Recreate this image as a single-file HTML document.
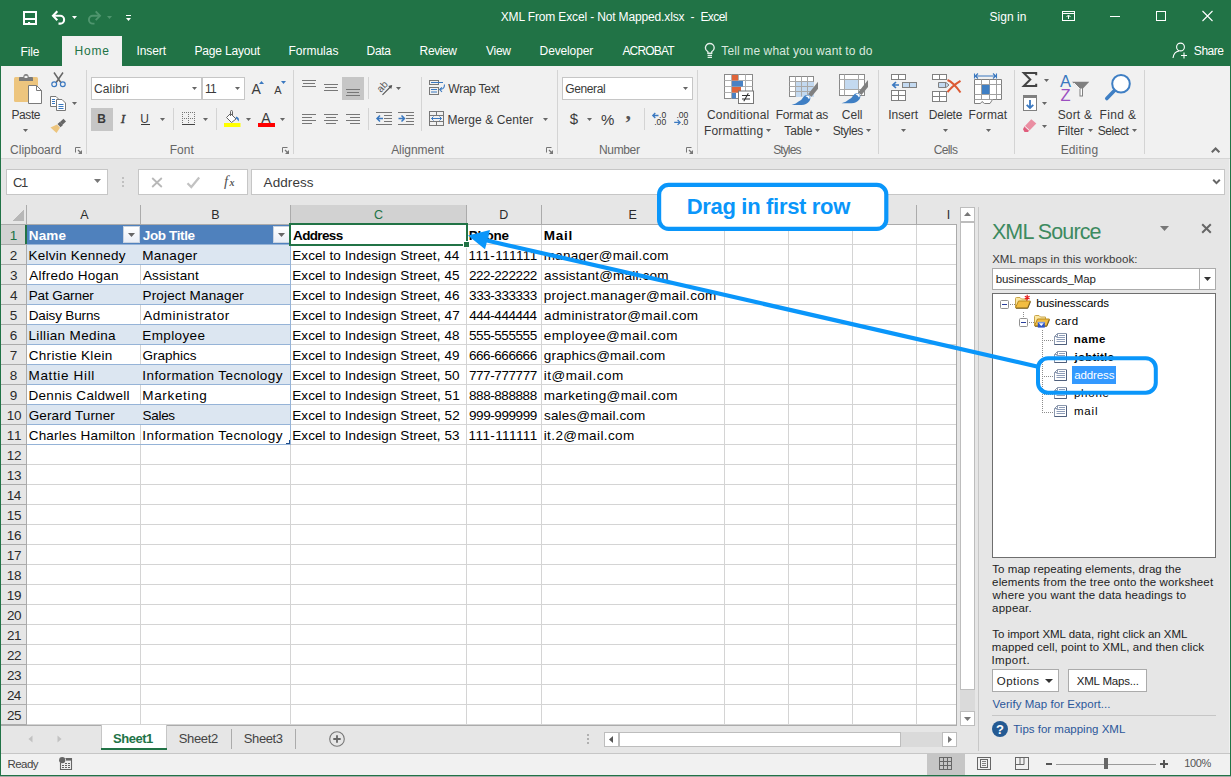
<!DOCTYPE html>
<html lang="en"><head><meta charset="utf-8"><title>XML From Excel - Not Mapped.xlsx - Excel</title>
<style>
html,body{margin:0;padding:0}
body{width:1231px;height:777px;position:relative;overflow:hidden;background:#e6e6e6;font-family:"Liberation Sans",sans-serif;font-size:12px;color:#444}
.a{position:absolute;display:block}
.t{position:absolute;white-space:nowrap;display:block}
svg{overflow:visible}
</style></head>
<body>
<!-- s_frame -->
<div class="a" style="left:0px;top:0px;width:1231px;height:66px;background:#217346;"></div>
<div class="a" style="left:1px;top:66px;width:1229px;height:92px;background:#f1f1f1;"></div>
<div class="a" style="left:1px;top:158px;width:1229px;height:1px;background:#d6d6d6;"></div>
<div class="a" style="left:62px;top:36px;width:60px;height:30px;background:#f1f1f1;"></div>
<div class="a" style="left:1px;top:753px;width:1229px;height:1px;background:#c6c6c6;"></div>
<div class="a" style="left:1px;top:754px;width:1229px;height:21px;background:#f1f1f1;"></div>
<div class="a" style="left:0px;top:0px;width:1px;height:777px;background:#217346;"></div>
<div class="a" style="left:1230px;top:0px;width:1px;height:777px;background:#217346;"></div>
<div class="a" style="left:0px;top:775px;width:1231px;height:1px;background:#217346;"></div>
<div class="a" style="left:0px;top:776px;width:1231px;height:1px;background:#a8a8a8;"></div>
<!-- s_title -->
<span class="t" style="left:500.73px;top:9px;font-size:12px;line-height:16px;color:#fff;letter-spacing:-0.144px;">XML From Excel - Not Mapped.xlsx</span>
<span class="t" style="left:690.47px;top:9px;font-size:12px;line-height:16px;color:#fff;">-</span>
<span class="t" style="left:700.42px;top:9px;font-size:12px;line-height:16px;color:#fff;letter-spacing:-0.589px;">Excel</span>
<span class="t" style="left:989.46px;top:9px;font-size:12px;line-height:16px;color:#fff;letter-spacing:0.039px;">Sign in</span>
<span class="t" style="left:20.62px;top:44px;font-size:12px;line-height:16px;color:#fff;letter-spacing:-0.139px;">File</span>
<span class="t" style="left:74.42px;top:43px;font-size:12px;line-height:16px;color:#217346;letter-spacing:0.836px;">Home</span>
<span class="t" style="left:136.49px;top:43px;font-size:12px;line-height:16px;color:#fff;letter-spacing:-0.083px;">Insert</span>
<span class="t" style="left:194.42px;top:43px;font-size:12px;line-height:16px;color:#fff;letter-spacing:-0.172px;">Page Layout</span>
<span class="t" style="left:288.42px;top:43px;font-size:12px;line-height:16px;color:#fff;">Formulas</span>
<span class="t" style="left:366.62px;top:43px;font-size:12px;line-height:16px;color:#fff;letter-spacing:-0.321px;">Data</span>
<span class="t" style="left:419.62px;top:43px;font-size:12px;line-height:16px;color:#fff;letter-spacing:-0.398px;">Review</span>
<span class="t" style="left:485.95px;top:43px;font-size:12px;line-height:16px;color:#fff;letter-spacing:-0.257px;">View</span>
<span class="t" style="left:539.62px;top:43px;font-size:12px;line-height:16px;color:#fff;letter-spacing:-0.139px;">Developer</span>
<span class="t" style="left:622.38px;top:43px;font-size:12px;line-height:16px;color:#fff;letter-spacing:-0.803px;">ACROBAT</span>
<span class="t" style="left:721.33px;top:43px;font-size:12px;line-height:16px;color:#d9e8df;letter-spacing:0.119px;">Tell me what you want to do</span>
<span class="t" style="left:1193.86px;top:43px;font-size:12px;line-height:16px;color:#fff;letter-spacing:-0.486px;">Share</span>
<svg class="a" style="left:23px;top:11px;" width="14" height="14" viewBox="0 0 14 14"><rect x="1" y="1" width="12" height="12" fill="none" stroke="#fff" stroke-width="2"/><rect x="2" y="7" width="10" height="2" fill="#fff"/><rect x="5" y="11" width="2.1" height="2" fill="#fff"/></svg>
<svg class="a" style="left:51px;top:10px;" width="16" height="15" viewBox="0 0 16 15"><path d="M2.5 5.8H9.2A3.9 3.9 0 0 1 9.2 13.6H7.5" fill="none" stroke="#fff" stroke-width="2.1"/><path d="M6.3 1.3L2 5.8L6.3 10.2" fill="none" stroke="#fff" stroke-width="2.1"/></svg>
<svg class="a" style="left:72px;top:16px" width="5" height="3" viewBox="0 0 5 3"><path d="M0 0H5L2.5 3Z" fill="#fff"/></svg>
<svg class="a" style="left:86px;top:10px;" width="16" height="15" viewBox="0 0 16 15"><path d="M13.5 5.8H6.8A3.9 3.9 0 0 0 6.8 13.6H8.5" fill="none" stroke="#4f956e" stroke-width="1.9"/><path d="M9.7 1.3L14 5.8L9.7 10.2" fill="none" stroke="#4f956e" stroke-width="1.9"/></svg>
<svg class="a" style="left:107px;top:16px" width="5" height="3" viewBox="0 0 5 3"><path d="M0 0H5L2.5 3Z" fill="#4f956e"/></svg>
<div class="a" style="left:126px;top:15px;width:5px;height:1px;background:#fff;"></div>
<svg class="a" style="left:126px;top:18px" width="5" height="3" viewBox="0 0 5 3"><path d="M0 0H5L2.5 3Z" fill="#fff"/></svg>
<svg class="a" style="left:1062px;top:11px;" width="13" height="10" viewBox="0 0 13 10"><rect x="0.5" y="0.5" width="12" height="9" fill="none" stroke="#fff"/><path d="M0.5 2.5H12.5" stroke="#fff"/><path d="M6.5 8V4.5M4.5 6L6.5 4L8.5 6" fill="none" stroke="#fff"/></svg>
<div class="a" style="left:1110px;top:16px;width:10px;height:1px;background:#fff;"></div>
<svg class="a" style="left:1156px;top:11px;" width="10" height="10" viewBox="0 0 10 10"><rect x="0.5" y="0.5" width="9" height="9" fill="none" stroke="#fff"/></svg>
<svg class="a" style="left:1202px;top:11px;" width="11" height="10" viewBox="0 0 11 10"><path d="M0.5 0L10.5 10M10.5 0L0.5 10" stroke="#fff" stroke-width="1.1"/></svg>
<svg class="a" style="left:704px;top:43px;" width="12" height="16" viewBox="0 0 12 16"><path d="M3.9 10.2V8.8C2.5 7.8 1.4 6.6 1.4 4.9A4.4 4.4 0 0 1 10.2 4.9C10.2 6.6 9.1 7.8 7.7 8.8V10.2Z" fill="none" stroke="#e3eee8" stroke-width="1.35"/><path d="M3.6 12.3H8M3.6 14.3H8" stroke="#e3eee8" stroke-width="1.2"/></svg>
<svg class="a" style="left:1172px;top:42px;" width="16" height="17" viewBox="0 0 16 17"><circle cx="8.5" cy="5" r="3.9" fill="none" stroke="#fff" stroke-width="1.1"/><path d="M1 16C1.5 12 4 9.5 7 9" fill="none" stroke="#fff" stroke-width="1.1"/><path d="M9 13.5H15M12 10.5V16.5" stroke="#fff" stroke-width="1.1"/></svg>
<!-- s_ribbon -->
<div class="a" style="left:86px;top:70px;width:1px;height:84px;background:#d4d4d4;"></div>
<div class="a" style="left:293px;top:70px;width:1px;height:84px;background:#d4d4d4;"></div>
<div class="a" style="left:557px;top:70px;width:1px;height:84px;background:#d4d4d4;"></div>
<div class="a" style="left:697px;top:70px;width:1px;height:84px;background:#d4d4d4;"></div>
<div class="a" style="left:878px;top:70px;width:1px;height:84px;background:#d4d4d4;"></div>
<div class="a" style="left:1014px;top:70px;width:1px;height:84px;background:#d4d4d4;"></div>
<div class="a" style="left:1144px;top:70px;width:1px;height:84px;background:#d4d4d4;"></div>
<span class="t" style="left:10.09px;top:142px;font-size:12px;line-height:16px;color:#666;">Clipboard</span>
<span class="t" style="left:169.72px;top:142px;font-size:12px;line-height:16px;color:#666;letter-spacing:0.020px;">Font</span>
<span class="t" style="left:391.18px;top:142px;font-size:12px;line-height:16px;color:#666;letter-spacing:-0.056px;">Alignment</span>
<span class="t" style="left:599.02px;top:142px;font-size:12px;line-height:16px;color:#666;letter-spacing:-0.359px;">Number</span>
<span class="t" style="left:773.16px;top:142px;font-size:12px;line-height:16px;color:#666;letter-spacing:-0.880px;">Styles</span>
<span class="t" style="left:933.69px;top:142px;font-size:12px;line-height:16px;color:#666;letter-spacing:-0.607px;">Cells</span>
<span class="t" style="left:1060.72px;top:142px;font-size:12px;line-height:16px;color:#666;letter-spacing:0.111px;">Editing</span>
<svg class="a" style="left:75px;top:147px;" width="7" height="7" viewBox="0 0 7 7"><path d="M0.5 5.5V0.5H5.5" fill="none" stroke="#777"/><path d="M3 3L6 6" fill="none" stroke="#777" stroke-width="1.2"/><path d="M7 3V7H3Z" fill="#777"/></svg>
<svg class="a" style="left:282px;top:147px;" width="7" height="7" viewBox="0 0 7 7"><path d="M0.5 5.5V0.5H5.5" fill="none" stroke="#777"/><path d="M3 3L6 6" fill="none" stroke="#777" stroke-width="1.2"/><path d="M7 3V7H3Z" fill="#777"/></svg>
<svg class="a" style="left:546px;top:147px;" width="7" height="7" viewBox="0 0 7 7"><path d="M0.5 5.5V0.5H5.5" fill="none" stroke="#777"/><path d="M3 3L6 6" fill="none" stroke="#777" stroke-width="1.2"/><path d="M7 3V7H3Z" fill="#777"/></svg>
<svg class="a" style="left:686px;top:147px;" width="7" height="7" viewBox="0 0 7 7"><path d="M0.5 5.5V0.5H5.5" fill="none" stroke="#777"/><path d="M3 3L6 6" fill="none" stroke="#777" stroke-width="1.2"/><path d="M7 3V7H3Z" fill="#777"/></svg>
<svg class="a" style="left:1211px;top:147px;" width="10" height="7" viewBox="0 0 10 7"><path d="M0.8 5.3L4.6 1.5L8.4 5.3" fill="none" stroke="#666" stroke-width="2"/></svg>
<svg class="a" style="left:14px;top:74px;" width="29" height="30" viewBox="0 0 29 30"><rect x="0" y="3" width="24" height="25" rx="1.5" fill="#edc57e"/><path d="M5 7V4Q5 3 6 3H9.3Q9.5 0 12 0Q14.5 0 14.7 3H18Q19 3 19 4V7Z" fill="#7a7a7a"/><rect x="10.5" y="1.8" width="3" height="2.2" fill="#f1f1f1"/><path d="M14.5 11.5H22.5L27.5 16.5V29.5H14.5Z" fill="#fff" stroke="#7a7a7a"/><path d="M22.5 11.5V16.5H27.5" fill="none" stroke="#7a7a7a"/></svg>
<span class="t" style="left:11.42px;top:107px;font-size:12px;line-height:16px;color:#3a3a3a;letter-spacing:-0.392px;">Paste</span>
<svg class="a" style="left:23px;top:129px" width="5" height="3" viewBox="0 0 5 3"><path d="M0 0H5L2.5 3Z" fill="#666"/></svg>
<svg class="a" style="left:51px;top:72px;" width="15" height="16" viewBox="0 0 15 16"><path d="M3 0.5L9.8 10.5M12 0.5L5.2 10.5" stroke="#666" stroke-width="1.5" fill="none"/><circle cx="3.2" cy="12.3" r="2.4" fill="none" stroke="#3a78c0" stroke-width="1.2"/><circle cx="11.8" cy="12.3" r="2.4" fill="none" stroke="#3a78c0" stroke-width="1.2"/></svg>
<svg class="a" style="left:50px;top:96px;" width="16" height="15" viewBox="0 0 16 15"><path d="M0.5 0.5H6L8.5 3V10.5H0.5Z" fill="#fff" stroke="#777"/><path d="M6.5 3.5H12L15.5 7V14.5H6.5Z" fill="#fff" stroke="#777"/><path d="M2 3.5H5M2 5.5H5M2 7.5H5" stroke="#3a78c0"/><path d="M8.5 8.5H13.5M8.5 10.5H13.5M8.5 12.5H13.5" stroke="#3a78c0"/></svg>
<svg class="a" style="left:72px;top:102px" width="5" height="3" viewBox="0 0 5 3"><path d="M0 0H5L2.5 3Z" fill="#666"/></svg>
<svg class="a" style="left:50px;top:118px;" width="17" height="16" viewBox="0 0 17 16"><path d="M10 4L13.5 0.8L16 3.5L12.5 6.8Z" fill="#666"/><path d="M7.5 6L10 3.8L13 7L10.5 9.2Z" fill="#666"/><path d="M7 6.5L10 9.8L6.5 15L0.5 9.5Z" fill="#edc57e"/></svg>
<div class="a" style="left:91px;top:77px;width:111px;height:23px;background:#fff;border:1px solid #c6c6c6;box-sizing:border-box;"></div>
<div class="a" style="left:202px;top:77px;width:43px;height:23px;background:#fff;border:1px solid #c6c6c6;box-sizing:border-box;"></div>
<span class="t" style="left:93.99px;top:81px;font-size:12px;line-height:16px;color:#3a3a3a;letter-spacing:0.135px;">Calibri</span>
<span class="t" style="left:205.09px;top:81px;font-size:12px;line-height:16px;color:#3a3a3a;letter-spacing:-0.957px;">11</span>
<svg class="a" style="left:192px;top:87px" width="5" height="3" viewBox="0 0 5 3"><path d="M0 0H5L2.5 3Z" fill="#666"/></svg>
<svg class="a" style="left:235px;top:87px" width="5" height="3" viewBox="0 0 5 3"><path d="M0 0H5L2.5 3Z" fill="#666"/></svg>
<span class="t" style="left:251.57px;top:80px;font-size:14px;line-height:18px;color:#3a3a3a;">A</span>
<svg class="a" style="left:259px;top:81px;" width="5" height="3" viewBox="0 0 5 3"><path d="M0 3H5L2.5 0Z" fill="#3a78c0"/></svg>
<span class="t" style="left:274.18px;top:83px;font-size:11px;line-height:14px;color:#3a3a3a;">A</span>
<svg class="a" style="left:281px;top:81px" width="5" height="3" viewBox="0 0 5 3"><path d="M0 0H5L2.5 3Z" fill="#3a78c0"/></svg>
<div class="a" style="left:91px;top:108px;width:22px;height:23px;background:#c6c6c6;"></div>
<span class="t" style="left:97.20px;top:111px;font-size:12px;line-height:16px;color:#3a3a3a;font-weight:bold;">B</span>
<span class="t" style="left:120.65px;top:110px;font-size:13.5px;line-height:17px;color:#3a3a3a;font-family:'Liberation Serif',serif;font-style:italic;-webkit-text-stroke:0.35px #3a3a3a;">I</span>
<span class="t" style="left:140.37px;top:111px;font-size:12px;line-height:16px;color:#3a3a3a;">U</span>
<div class="a" style="left:141px;top:124px;width:9px;height:1px;background:#3a3a3a;"></div>
<svg class="a" style="left:160px;top:118px" width="5" height="3" viewBox="0 0 5 3"><path d="M0 0H5L2.5 3Z" fill="#666"/></svg>
<div class="a" style="left:173px;top:108px;width:1px;height:22px;background:#d4d4d4;"></div>
<svg class="a" style="left:182px;top:112px;" width="13" height="13" viewBox="0 0 13 13"><rect x="0" y="0" width="1" height="1" fill="#777"/><rect x="2" y="0" width="1" height="1" fill="#777"/><rect x="4" y="0" width="1" height="1" fill="#777"/><rect x="6" y="0" width="1" height="1" fill="#777"/><rect x="8" y="0" width="1" height="1" fill="#777"/><rect x="10" y="0" width="1" height="1" fill="#777"/><rect x="12" y="0" width="1" height="1" fill="#777"/><rect x="0" y="6" width="1" height="1" fill="#777"/><rect x="2" y="6" width="1" height="1" fill="#777"/><rect x="4" y="6" width="1" height="1" fill="#777"/><rect x="6" y="6" width="1" height="1" fill="#777"/><rect x="8" y="6" width="1" height="1" fill="#777"/><rect x="10" y="6" width="1" height="1" fill="#777"/><rect x="12" y="6" width="1" height="1" fill="#777"/><rect x="0" y="0" width="1" height="1" fill="#777"/><rect x="0" y="2" width="1" height="1" fill="#777"/><rect x="0" y="4" width="1" height="1" fill="#777"/><rect x="0" y="6" width="1" height="1" fill="#777"/><rect x="0" y="8" width="1" height="1" fill="#777"/><rect x="0" y="10" width="1" height="1" fill="#777"/><rect x="6" y="0" width="1" height="1" fill="#777"/><rect x="6" y="2" width="1" height="1" fill="#777"/><rect x="6" y="4" width="1" height="1" fill="#777"/><rect x="6" y="6" width="1" height="1" fill="#777"/><rect x="6" y="8" width="1" height="1" fill="#777"/><rect x="6" y="10" width="1" height="1" fill="#777"/><rect x="12" y="0" width="1" height="1" fill="#777"/><rect x="12" y="2" width="1" height="1" fill="#777"/><rect x="12" y="4" width="1" height="1" fill="#777"/><rect x="12" y="6" width="1" height="1" fill="#777"/><rect x="12" y="8" width="1" height="1" fill="#777"/><rect x="12" y="10" width="1" height="1" fill="#777"/><rect x="0" y="12" width="13" height="1" fill="#444"/></svg>
<svg class="a" style="left:203px;top:118px" width="5" height="3" viewBox="0 0 5 3"><path d="M0 0H5L2.5 3Z" fill="#666"/></svg>
<div class="a" style="left:216px;top:108px;width:1px;height:22px;background:#d4d4d4;"></div>
<svg class="a" style="left:224px;top:110px;" width="18" height="18" viewBox="0 0 18 18"><path d="M6.5 3.5L12 9L7.5 12.5L2.5 7.5Z" fill="#fff" stroke="#666"/><path d="M6.5 6V1.5Q6.5 0.5 7.5 0.5Q8.5 0.5 8.5 1.5V5" fill="none" stroke="#666"/><path d="M12.5 6.5Q16 8 14.5 11.5Q13.5 9 11.5 8Z" fill="#3a78c0"/><rect x="0" y="13" width="16.5" height="4" fill="#ffff00"/></svg>
<svg class="a" style="left:246px;top:118px" width="5" height="3" viewBox="0 0 5 3"><path d="M0 0H5L2.5 3Z" fill="#666"/></svg>
<span class="t" style="left:261.27px;top:109px;font-size:14px;line-height:18px;color:#3a3a3a;">A</span>
<div class="a" style="left:258px;top:123px;width:16.5px;height:4px;background:#ff0000;"></div>
<svg class="a" style="left:280px;top:118px" width="5" height="3" viewBox="0 0 5 3"><path d="M0 0H5L2.5 3Z" fill="#666"/></svg>
<div class="a" style="left:302px;top:80px;width:14px;height:1px;background:#777;"></div><div class="a" style="left:303px;top:83px;width:12px;height:1px;background:#777;"></div><div class="a" style="left:302px;top:86px;width:14px;height:1px;background:#777;"></div>
<div class="a" style="left:324px;top:84px;width:14px;height:1px;background:#777;"></div><div class="a" style="left:325px;top:87px;width:12px;height:1px;background:#777;"></div><div class="a" style="left:324px;top:90px;width:14px;height:1px;background:#777;"></div>
<div class="a" style="left:342px;top:77px;width:22px;height:23px;background:#c6c6c6;"></div>
<div class="a" style="left:346px;top:89px;width:14px;height:1px;background:#777;"></div><div class="a" style="left:347px;top:92px;width:12px;height:1px;background:#777;"></div><div class="a" style="left:346px;top:95px;width:14px;height:1px;background:#777;"></div>
<div class="a" style="left:368px;top:77px;width:1px;height:22px;background:#d4d4d4;"></div>
<div class="a" style="left:302px;top:114px;width:14px;height:1px;background:#777;"></div><div class="a" style="left:302px;top:117px;width:10px;height:1px;background:#777;"></div><div class="a" style="left:302px;top:120px;width:14px;height:1px;background:#777;"></div><div class="a" style="left:302px;top:123px;width:10px;height:1px;background:#777;"></div>
<div class="a" style="left:324px;top:114px;width:14px;height:1px;background:#777;"></div><div class="a" style="left:326px;top:117px;width:10px;height:1px;background:#777;"></div><div class="a" style="left:324px;top:120px;width:14px;height:1px;background:#777;"></div><div class="a" style="left:326px;top:123px;width:10px;height:1px;background:#777;"></div>
<div class="a" style="left:346px;top:114px;width:14px;height:1px;background:#777;"></div><div class="a" style="left:350px;top:117px;width:10px;height:1px;background:#777;"></div><div class="a" style="left:346px;top:120px;width:14px;height:1px;background:#777;"></div><div class="a" style="left:350px;top:123px;width:10px;height:1px;background:#777;"></div>
<div class="a" style="left:368px;top:108px;width:1px;height:22px;background:#d4d4d4;"></div>
<svg class="a" style="left:375px;top:79px;" width="18" height="17" viewBox="0 0 18 17"><text x="0" y="0" font-size="10" fill="#555" transform="translate(6 14) rotate(-48)" font-family="Liberation Sans,sans-serif">ab</text><path d="M7.5 15.8L16.3 7" fill="none" stroke="#555" stroke-width="1.1"/><path d="M17.2 6L13.2 7L16.3 10Z" fill="#555"/></svg>
<svg class="a" style="left:396px;top:87px" width="5" height="3" viewBox="0 0 5 3"><path d="M0 0H5L2.5 3Z" fill="#666"/></svg>
<div class="a" style="left:376px;top:112px;width:16px;height:1px;background:#777;"></div><div class="a" style="left:384px;top:115px;width:8px;height:1px;background:#777;"></div><div class="a" style="left:384px;top:118px;width:8px;height:1px;background:#777;"></div><div class="a" style="left:384px;top:121px;width:8px;height:1px;background:#777;"></div><div class="a" style="left:376px;top:124px;width:16px;height:1px;background:#777;"></div>
<svg class="a" style="left:376px;top:114px;" width="8" height="9" viewBox="0 0 8 9"><path d="M7 4.5H1.5M4 1.5L1 4.5L4 7.5" fill="none" stroke="#3a78c0" stroke-width="1.5"/></svg>
<div class="a" style="left:398px;top:112px;width:16px;height:1px;background:#777;"></div><div class="a" style="left:406px;top:115px;width:8px;height:1px;background:#777;"></div><div class="a" style="left:406px;top:118px;width:8px;height:1px;background:#777;"></div><div class="a" style="left:406px;top:121px;width:8px;height:1px;background:#777;"></div><div class="a" style="left:398px;top:124px;width:16px;height:1px;background:#777;"></div>
<svg class="a" style="left:398px;top:114px;" width="8" height="9" viewBox="0 0 8 9"><path d="M0.5 4.5H6M3.5 1.5L6.5 4.5L3.5 7.5" fill="none" stroke="#3a78c0" stroke-width="1.5"/></svg>
<div class="a" style="left:421px;top:77px;width:1px;height:54px;background:#d4d4d4;"></div>
<svg class="a" style="left:429px;top:80px;" width="16" height="15" viewBox="0 0 16 15"><rect x="0.5" y="0.5" width="9" height="4" fill="none" stroke="#777"/><rect x="0.5" y="7.5" width="9" height="7" fill="none" stroke="#777"/><path d="M2 2.5H14M2 9.5H8M2 12H8" stroke="#3a78c0"/><path d="M15.5 4.5Q15.5 9.5 11 9.5M13 7.3L10.7 9.6L13 11.8" fill="none" stroke="#3a78c0" stroke-width="1.1"/></svg>
<span class="t" style="left:448.35px;top:81px;font-size:12px;line-height:16px;color:#3a3a3a;letter-spacing:-0.280px;">Wrap Text</span>
<svg class="a" style="left:429px;top:111px;" width="15" height="15" viewBox="0 0 15 15"><rect x="0.5" y="0.5" width="14" height="14" fill="none" stroke="#777"/><path d="M0.5 4.5H14.5M0.5 10.5H14.5M7.5 0.5V4.5M7.5 10.5V14.5" stroke="#777"/><path d="M2.5 7.5H12.5M4.5 5.5L2.5 7.5L4.5 9.5M10.5 5.5L12.5 7.5L10.5 9.5" fill="none" stroke="#3a78c0"/></svg>
<span class="t" style="left:447.42px;top:112px;font-size:12px;line-height:16px;color:#3a3a3a;letter-spacing:0.083px;">Merge &amp; Center</span>
<svg class="a" style="left:543px;top:118px" width="5" height="3" viewBox="0 0 5 3"><path d="M0 0H5L2.5 3Z" fill="#666"/></svg>
<div class="a" style="left:562px;top:77px;width:131px;height:23px;background:#fff;border:1px solid #c6c6c6;box-sizing:border-box;"></div>
<span class="t" style="left:565.20px;top:81px;font-size:12px;line-height:16px;color:#3a3a3a;letter-spacing:-0.381px;">General</span>
<svg class="a" style="left:683px;top:87px" width="5" height="3" viewBox="0 0 5 3"><path d="M0 0H5L2.5 3Z" fill="#666"/></svg>
<span class="t" style="left:569.64px;top:109px;font-size:15px;line-height:19px;color:#3a3a3a;">$</span>
<svg class="a" style="left:587px;top:118px" width="5" height="3" viewBox="0 0 5 3"><path d="M0 0H5L2.5 3Z" fill="#666"/></svg>
<span class="t" style="left:601.07px;top:110px;font-size:15px;line-height:19px;color:#3a3a3a;">%</span>
<span class="t" style="left:625.51px;top:98px;font-size:22px;line-height:27px;color:#555;font-family:'Liberation Serif',serif;font-weight:bold;">,</span>
<div class="a" style="left:644px;top:108px;width:1px;height:22px;background:#d4d4d4;"></div>
<svg class="a" style="left:652px;top:111px;" width="16" height="15" viewBox="0 0 16 15"><text x="14.2" y="6.7" font-family="Liberation Sans,sans-serif" font-size="8.6" fill="#333" text-anchor="end">.0</text><text x="14.2" y="13.7" font-family="Liberation Sans,sans-serif" font-size="8.6" fill="#333" text-anchor="end">.00</text><path d="M6.5 4.5H1M3.3 2L0.8 4.5L3.3 7" fill="none" stroke="#3a78c0" stroke-width="1.3"/></svg>
<svg class="a" style="left:674px;top:111px;" width="16" height="15" viewBox="0 0 16 15"><text x="14.4" y="6.7" font-family="Liberation Sans,sans-serif" font-size="8.6" fill="#333" text-anchor="end">.00</text><text x="14.4" y="13.7" font-family="Liberation Sans,sans-serif" font-size="8.6" fill="#333" text-anchor="end">.0</text><path d="M0.2 11.4H6M3.6 8.9L6.1 11.4L3.6 13.9" fill="none" stroke="#3a78c0" stroke-width="1.3"/></svg>
<svg class="a" style="left:724px;top:74px;" width="31" height="31" viewBox="0 0 31 31"><rect x="0.5" y="0.5" width="28" height="24" fill="#fff" stroke="#8a8a8a"/><path d="M7.5 0.5V24.5M14.5 0.5V24.5M21.5 0.5V24.5M0.5 6.5H28.5M0.5 12.5H28.5M0.5 18.5H28.5" stroke="#b0b0b0"/><rect x="8" y="1" width="6" height="5.5" fill="#e0653a"/><rect x="8" y="7" width="11" height="5.5" fill="#4a82c3"/><rect x="8" y="13" width="9" height="5.5" fill="#e0653a"/><rect x="8" y="19" width="4" height="5.5" fill="#4a82c3"/><rect x="14.5" y="17" width="15" height="12.5" fill="#fff" stroke="#777"/><path d="M18 21.5H26M18 25H26M24.3 19.3L19.8 27.3" stroke="#333" fill="none" stroke-width="1.1"/></svg>
<span class="t" style="left:706.89px;top:107px;font-size:12px;line-height:16px;color:#3a3a3a;letter-spacing:0.237px;">Conditional</span>
<span class="t" style="left:703.92px;top:123px;font-size:12px;line-height:16px;color:#3a3a3a;letter-spacing:0.212px;">Formatting</span>
<svg class="a" style="left:766px;top:129px" width="5" height="3" viewBox="0 0 5 3"><path d="M0 0H5L2.5 3Z" fill="#666"/></svg>
<svg class="a" style="left:789px;top:76px;" width="30" height="29" viewBox="0 0 30 29"><rect x="0.5" y="0.5" width="24" height="20" fill="#fff" stroke="#8a8a8a"/><rect x="7" y="6" width="18" height="15" fill="#c3d9f0"/><path d="M6.5 0.5V20.5M12.5 0.5V20.5M18.5 0.5V20.5M0.5 5.5H24.5M0.5 10.5H24.5M0.5 15.5H24.5" stroke="#a8a8a8"/><path d="M13 20.5H25V14" fill="none" stroke="#f1f1f1" stroke-width="0"/><path d="M19 18.2l10 -12.5v7l-6.5 8z" fill="#808080"/><path d="M9.5 25.5q3 -1 4.5 -4q2.5 -3.5 6 -2q2.5 2 0.5 5.5q-3 4 -8 4h-10q5 -1.5 7 -3.5z" fill="#3f7fc4"/><path d="M16.5 20.3q2 -1.5 4 0q0.8 1.5 -0.5 3q-1 -2.5 -3.5 -3z" fill="#fff"/></svg>
<span class="t" style="left:775.72px;top:107px;font-size:12px;line-height:16px;color:#3a3a3a;letter-spacing:-0.174px;">Format as</span>
<span class="t" style="left:784.33px;top:123px;font-size:12px;line-height:16px;color:#3a3a3a;letter-spacing:-0.171px;">Table</span>
<svg class="a" style="left:815px;top:129px" width="5" height="3" viewBox="0 0 5 3"><path d="M0 0H5L2.5 3Z" fill="#666"/></svg>
<svg class="a" style="left:839px;top:74px;" width="30" height="29" viewBox="0 0 30 29"><rect x="0.5" y="0.5" width="25" height="21" fill="#fff" stroke="#8a8a8a"/><rect x="6" y="6" width="13" height="9.5" fill="#c3d9f0"/><path d="M5.5 0.5V21.5M19.5 0.5V21.5M0.5 5.5H25.5M0.5 15.5H25.5" stroke="#a8a8a8"/><path d="M19 18.5l10 -12.5v7l-6.5 8z" fill="#808080"/><path d="M9.5 25.8q3 -1 4.5 -4q2.5 -3.5 6 -2q2.5 2 0.5 5.5q-3 4 -8 4h-10q5 -1.5 7 -3.5z" fill="#3f7fc4"/><path d="M16.5 20.6q2 -1.5 4 0q0.8 1.5 -0.5 3q-1 -2.5 -3.5 -3z" fill="#fff"/></svg>
<span class="t" style="left:841.79px;top:107px;font-size:12px;line-height:16px;color:#3a3a3a;letter-spacing:0.013px;">Cell</span>
<span class="t" style="left:832.66px;top:123px;font-size:12px;line-height:16px;color:#3a3a3a;letter-spacing:-0.440px;">Styles</span>
<svg class="a" style="left:866px;top:129px" width="5" height="3" viewBox="0 0 5 3"><path d="M0 0H5L2.5 3Z" fill="#666"/></svg>
<svg class="a" style="left:891px;top:74px;" width="27" height="28" viewBox="0 0 27 28"><rect x="0.5" y="0.5" width="14" height="5" fill="#fff" stroke="#808080"/><path d="M7.5 0.5V5.5" stroke="#808080"/><rect x="11.5" y="8.5" width="14" height="5" fill="#c3d9f0" stroke="#808080"/><path d="M18.5 8.5V13.5" stroke="#808080"/><rect x="0.5" y="16.5" width="14" height="10" fill="#fff" stroke="#808080"/><path d="M7.5 16.5V26.5M0.5 21.5H14.5" stroke="#808080"/><path d="M8 11H2M5 8L1.8 11L5 14" fill="none" stroke="#3a78c0" stroke-width="1.7"/></svg>
<span class="t" style="left:888.29px;top:107px;font-size:12px;line-height:16px;color:#3a3a3a;letter-spacing:-0.063px;">Insert</span>
<svg class="a" style="left:901px;top:129px" width="5" height="3" viewBox="0 0 5 3"><path d="M0 0H5L2.5 3Z" fill="#666"/></svg>
<svg class="a" style="left:932px;top:74px;" width="30" height="28" viewBox="0 0 30 28"><rect x="0.5" y="0.5" width="14" height="5" fill="#fff" stroke="#808080"/><path d="M7.5 0.5V5.5" stroke="#808080"/><path d="M6.5 8.5H14L17 11L14 13.5H6.5Z" fill="#c3d9f0" stroke="#808080"/><path d="M13.5 8.5V13.5" stroke="#808080"/><rect x="0.5" y="17.5" width="14" height="10" fill="#fff" stroke="#808080"/><path d="M7.5 17.5V27.5M0.5 22.5H14.5" stroke="#808080"/><path d="M15.5 6Q21 8 28.5 18.5M28.5 6.8Q20 12 15.5 18.2" fill="none" stroke="#dc5a34" stroke-width="2"/></svg>
<span class="t" style="left:928.72px;top:107px;font-size:12px;line-height:16px;color:#3a3a3a;letter-spacing:-0.194px;">Delete</span>
<svg class="a" style="left:943px;top:129px" width="5" height="3" viewBox="0 0 5 3"><path d="M0 0H5L2.5 3Z" fill="#666"/></svg>
<svg class="a" style="left:974px;top:73px;" width="29" height="32" viewBox="0 0 29 32"><path d="M1 3H22M0.5 0.5V5.5M22.5 0.5V5.5M4 0.5L1.3 3L4 5.5M19 0.5L21.7 3L19 5.5" fill="none" stroke="#3a78c0" stroke-width="1.1"/><path d="M0.5 6.5H27.5V26.5H18.5L16 30.5H10.5L8 28.5L6.5 30.5H0.5Z" fill="#fff" stroke="#808080"/><path d="M7.5 6.5V26.5M15.5 6.5V26.5M22.5 6.5V26.5M0.5 11.5H27.5M0.5 21.5H27.5M0.5 26.5H19" stroke="#a0a0a0"/><rect x="8" y="12" width="7.5" height="9" fill="#3f7fc4"/></svg>
<span class="t" style="left:968.62px;top:107px;font-size:12px;line-height:16px;color:#3a3a3a;letter-spacing:0.114px;">Format</span>
<svg class="a" style="left:986px;top:129px" width="5" height="3" viewBox="0 0 5 3"><path d="M0 0H5L2.5 3Z" fill="#666"/></svg>
<svg class="a" style="left:1022px;top:72px;" width="15" height="15" viewBox="0 0 15 15"><path d="M14.2 3.2V1H1.8L8.3 7.5L1.8 14H14.2V11.8" fill="none" stroke="#444" stroke-width="2"/></svg>
<svg class="a" style="left:1044px;top:79px" width="5" height="3" viewBox="0 0 5 3"><path d="M0 0H5L2.5 3Z" fill="#666"/></svg>
<svg class="a" style="left:1023px;top:95px;" width="14" height="16" viewBox="0 0 14 16"><rect x="0.5" y="0.5" width="13" height="15" fill="#fff" stroke="#808080"/><rect x="0" y="0" width="14" height="3" fill="#808080"/><path d="M7 5V13M3.7 9.8L7 13L10.3 9.8" fill="none" stroke="#3a78c0" stroke-width="1.8"/></svg>
<svg class="a" style="left:1042px;top:102px" width="5" height="3" viewBox="0 0 5 3"><path d="M0 0H5L2.5 3Z" fill="#666"/></svg>
<svg class="a" style="left:1023px;top:119px;" width="14" height="13" viewBox="0 0 14 13"><path d="M8.3 0.3L13.3 4.6L6 12L1.2 7.8Z" fill="#ea8ea2"/><path d="M1.2 7.8L6 12L4.8 13H1.5L0 10.2Z" fill="#e05d7c"/><path d="M1.9 7.2L6.6 11.4" stroke="#f1f1f1" stroke-width="0.9"/></svg>
<svg class="a" style="left:1042px;top:125px" width="5" height="3" viewBox="0 0 5 3"><path d="M0 0H5L2.5 3Z" fill="#666"/></svg>
<svg class="a" style="left:1059px;top:74px;" width="31" height="28" viewBox="0 0 31 28"><text x="1" y="13" font-family="Liberation Sans,sans-serif" font-size="16.5" fill="#3a78c0">A</text><text x="1.6" y="26.7" font-family="Liberation Sans,sans-serif" font-size="16.5" fill="#9b4fc0">Z</text><path d="M13 7.7H30.3L24 14.5V22.5H20.5V14.5Z" fill="#808080"/><rect x="21.5" y="14.5" width="1.5" height="7" fill="#fff"/><path d="M15 9L20.8 14.8" stroke="#fff" stroke-width="0.9"/></svg>
<span class="t" style="left:1057.66px;top:107px;font-size:12px;line-height:16px;color:#3a3a3a;letter-spacing:0.177px;">Sort &amp;</span>
<span class="t" style="left:1057.72px;top:123px;font-size:12px;line-height:16px;color:#3a3a3a;letter-spacing:-0.076px;">Filter</span>
<svg class="a" style="left:1088px;top:129px" width="5" height="3" viewBox="0 0 5 3"><path d="M0 0H5L2.5 3Z" fill="#666"/></svg>
<svg class="a" style="left:1104px;top:73px;" width="28" height="29" viewBox="0 0 28 29"><path d="M10.5 17.5L2.8 25.5" stroke="#3f7fc4" stroke-width="3.6" stroke-linecap="round"/><circle cx="17" cy="10.8" r="8.8" fill="#fff" stroke="#3f7fc4" stroke-width="2"/></svg>
<span class="t" style="left:1099.52px;top:107px;font-size:12px;line-height:16px;color:#3a3a3a;letter-spacing:0.338px;">Find &amp;</span>
<span class="t" style="left:1097.76px;top:123px;font-size:12px;line-height:16px;color:#3a3a3a;letter-spacing:-0.464px;">Select</span>
<svg class="a" style="left:1132px;top:129px" width="5" height="3" viewBox="0 0 5 3"><path d="M0 0H5L2.5 3Z" fill="#666"/></svg>
<!-- s_formula -->
<div class="a" style="left:6px;top:169px;width:102px;height:26px;background:#fff;border:1px solid #c6c6c6;box-sizing:border-box;"></div>
<span class="t" style="left:12.94px;top:174px;font-size:13px;line-height:17px;color:#3a3a3a;letter-spacing:-1.324px;">C1</span>
<svg class="a" style="left:94px;top:179px" width="7" height="4" viewBox="0 0 7 4"><path d="M0 0H7L3.5 4Z" fill="#777"/></svg>
<div class="a" style="left:122px;top:177px;width:2px;height:2px;background:#c0c0c0;"></div>
<div class="a" style="left:122px;top:181px;width:2px;height:2px;background:#c0c0c0;"></div>
<div class="a" style="left:122px;top:185px;width:2px;height:2px;background:#c0c0c0;"></div>
<div class="a" style="left:138px;top:169px;width:110px;height:26px;background:#fff;border:1px solid #c6c6c6;box-sizing:border-box;"></div>
<svg class="a" style="left:151px;top:177px;" width="12" height="11" viewBox="0 0 12 11"><path d="M1.2 1L10.8 10M10.8 1L1.2 10" stroke="#b8b8b8" stroke-width="1.8"/></svg>
<svg class="a" style="left:186px;top:176px;" width="15" height="13" viewBox="0 0 15 13"><path d="M1.5 7.2L5.3 11L13.2 1.5" fill="none" stroke="#c2c2c2" stroke-width="2.2"/></svg>
<span class="t" style="left:224.03px;top:172px;font-size:15px;line-height:18px;color:#555;font-family:'Liberation Serif',serif;font-style:italic;">f</span>
<span class="t" style="left:229.62px;top:176px;font-size:10px;line-height:13px;color:#555;font-family:'Liberation Serif',serif;font-weight:bold;font-style:italic;">x</span>
<div class="a" style="left:251px;top:169px;width:974px;height:26px;background:#fff;border:1px solid #c6c6c6;box-sizing:border-box;"></div>
<span class="t" style="left:263.57px;top:174px;font-size:13.5px;line-height:17px;color:#3a3a3a;letter-spacing:0.082px;">Address</span>
<svg class="a" style="left:1212px;top:179px;" width="9" height="6" viewBox="0 0 9 6"><path d="M1.2 0.8L4.5 4.1L7.8 0.8" fill="none" stroke="#666" stroke-width="2"/></svg>
<!-- s_grid -->
<div class="a" style="left:27px;top:225px;width:930px;height:500px;background:#fff;"></div>
<div class="a" style="left:291px;top:205px;width:176px;height:18px;background:#d2d2d2;"></div>
<div class="a" style="left:1px;top:225px;width:25px;height:19px;background:#d2d2d2;"></div>
<div class="a" style="left:27px;top:225px;width:263px;height:19px;background:#4f81bd;"></div>
<div class="a" style="left:27px;top:245px;width:263px;height:19px;background:#dce6f1;"></div>
<div class="a" style="left:27px;top:285px;width:263px;height:19px;background:#dce6f1;"></div>
<div class="a" style="left:27px;top:325px;width:263px;height:19px;background:#dce6f1;"></div>
<div class="a" style="left:27px;top:365px;width:263px;height:19px;background:#dce6f1;"></div>
<div class="a" style="left:27px;top:405px;width:263px;height:19px;background:#dce6f1;"></div>
<svg class="a" style="left:0;top:0" width="1231" height="777" viewBox="0 0 1231 777" shape-rendering="crispEdges"><rect x="140" y="225" width="1" height="500" fill="#d4d4d4"/><rect x="290" y="225" width="1" height="500" fill="#d4d4d4"/><rect x="466" y="225" width="1" height="500" fill="#d4d4d4"/><rect x="541" y="225" width="1" height="500" fill="#d4d4d4"/><rect x="724" y="225" width="1" height="500" fill="#d4d4d4"/><rect x="788" y="225" width="1" height="500" fill="#d4d4d4"/><rect x="852" y="225" width="1" height="500" fill="#d4d4d4"/><rect x="916" y="225" width="1" height="500" fill="#d4d4d4"/><rect x="27" y="244" width="930" height="1" fill="#d4d4d4"/><rect x="27" y="264" width="930" height="1" fill="#d4d4d4"/><rect x="27" y="284" width="930" height="1" fill="#d4d4d4"/><rect x="27" y="304" width="930" height="1" fill="#d4d4d4"/><rect x="27" y="324" width="930" height="1" fill="#d4d4d4"/><rect x="27" y="344" width="930" height="1" fill="#d4d4d4"/><rect x="27" y="364" width="930" height="1" fill="#d4d4d4"/><rect x="27" y="384" width="930" height="1" fill="#d4d4d4"/><rect x="27" y="404" width="930" height="1" fill="#d4d4d4"/><rect x="27" y="424" width="930" height="1" fill="#d4d4d4"/><rect x="27" y="444" width="930" height="1" fill="#d4d4d4"/><rect x="27" y="464" width="930" height="1" fill="#d4d4d4"/><rect x="27" y="484" width="930" height="1" fill="#d4d4d4"/><rect x="27" y="504" width="930" height="1" fill="#d4d4d4"/><rect x="27" y="524" width="930" height="1" fill="#d4d4d4"/><rect x="27" y="544" width="930" height="1" fill="#d4d4d4"/><rect x="27" y="564" width="930" height="1" fill="#d4d4d4"/><rect x="27" y="584" width="930" height="1" fill="#d4d4d4"/><rect x="27" y="604" width="930" height="1" fill="#d4d4d4"/><rect x="27" y="624" width="930" height="1" fill="#d4d4d4"/><rect x="27" y="644" width="930" height="1" fill="#d4d4d4"/><rect x="27" y="664" width="930" height="1" fill="#d4d4d4"/><rect x="27" y="684" width="930" height="1" fill="#d4d4d4"/><rect x="27" y="704" width="930" height="1" fill="#d4d4d4"/><rect x="27" y="724" width="930" height="1" fill="#d4d4d4"/><rect x="27" y="244" width="264" height="1" fill="#95b3d7"/><rect x="27" y="264" width="264" height="1" fill="#95b3d7"/><rect x="27" y="284" width="264" height="1" fill="#95b3d7"/><rect x="27" y="304" width="264" height="1" fill="#95b3d7"/><rect x="27" y="324" width="264" height="1" fill="#95b3d7"/><rect x="27" y="344" width="264" height="1" fill="#95b3d7"/><rect x="27" y="364" width="264" height="1" fill="#95b3d7"/><rect x="27" y="384" width="264" height="1" fill="#95b3d7"/><rect x="27" y="404" width="264" height="1" fill="#95b3d7"/><rect x="27" y="424" width="264" height="1" fill="#95b3d7"/><rect x="27" y="444" width="264" height="1" fill="#95b3d7"/><rect x="290" y="245" width="1" height="200" fill="#95b3d7"/><rect x="140" y="225" width="1" height="19" fill="#4f81bd"/><rect x="140" y="245" width="1" height="19" fill="#dce6f1"/><rect x="140" y="285" width="1" height="19" fill="#dce6f1"/><rect x="140" y="325" width="1" height="19" fill="#dce6f1"/><rect x="140" y="365" width="1" height="19" fill="#dce6f1"/><rect x="140" y="405" width="1" height="19" fill="#dce6f1"/><rect x="26" y="205" width="1" height="20" fill="#ababab"/><rect x="140" y="205" width="1" height="20" fill="#ababab"/><rect x="290" y="205" width="1" height="20" fill="#ababab"/><rect x="466" y="205" width="1" height="20" fill="#ababab"/><rect x="541" y="205" width="1" height="20" fill="#ababab"/><rect x="724" y="205" width="1" height="20" fill="#ababab"/><rect x="788" y="205" width="1" height="20" fill="#ababab"/><rect x="852" y="205" width="1" height="20" fill="#ababab"/><rect x="916" y="205" width="1" height="20" fill="#ababab"/><rect x="1" y="224" width="956" height="1" fill="#ababab"/><rect x="26" y="225" width="1" height="500" fill="#ababab"/><rect x="1" y="244" width="26" height="1" fill="#ababab"/><rect x="1" y="264" width="26" height="1" fill="#ababab"/><rect x="1" y="284" width="26" height="1" fill="#ababab"/><rect x="1" y="304" width="26" height="1" fill="#ababab"/><rect x="1" y="324" width="26" height="1" fill="#ababab"/><rect x="1" y="344" width="26" height="1" fill="#ababab"/><rect x="1" y="364" width="26" height="1" fill="#ababab"/><rect x="1" y="384" width="26" height="1" fill="#ababab"/><rect x="1" y="404" width="26" height="1" fill="#ababab"/><rect x="1" y="424" width="26" height="1" fill="#ababab"/><rect x="1" y="444" width="26" height="1" fill="#ababab"/><rect x="1" y="464" width="26" height="1" fill="#ababab"/><rect x="1" y="484" width="26" height="1" fill="#ababab"/><rect x="1" y="504" width="26" height="1" fill="#ababab"/><rect x="1" y="524" width="26" height="1" fill="#ababab"/><rect x="1" y="544" width="26" height="1" fill="#ababab"/><rect x="1" y="564" width="26" height="1" fill="#ababab"/><rect x="1" y="584" width="26" height="1" fill="#ababab"/><rect x="1" y="604" width="26" height="1" fill="#ababab"/><rect x="1" y="624" width="26" height="1" fill="#ababab"/><rect x="1" y="644" width="26" height="1" fill="#ababab"/><rect x="1" y="664" width="26" height="1" fill="#ababab"/><rect x="1" y="684" width="26" height="1" fill="#ababab"/><rect x="1" y="704" width="26" height="1" fill="#ababab"/><rect x="1" y="724" width="26" height="1" fill="#ababab"/><rect x="956" y="224" width="1" height="502" fill="#ababab"/><rect x="1" y="725" width="956" height="1" fill="#ababab"/><path d="M23.5 209.5V221H12Z" fill="#b7b7b7"/><rect x="25" y="225" width="2" height="19" fill="#217346"/><path d="M286 444H290V440H289V443H286Z" fill="#1f4e8c"/></svg>
<span class="t" style="left:80.13px;top:207px;font-size:12.5px;line-height:16px;color:#2b2b2b;">A</span>
<span class="t" style="left:211.15px;top:207px;font-size:12.5px;line-height:16px;color:#2b2b2b;">B</span>
<span class="t" style="left:373.91px;top:207px;font-size:12.5px;line-height:16px;color:#217346;">C</span>
<span class="t" style="left:499.27px;top:207px;font-size:12.5px;line-height:16px;color:#2b2b2b;">D</span>
<span class="t" style="left:628.59px;top:207px;font-size:12.5px;line-height:16px;color:#2b2b2b;">E</span>
<span class="t" style="left:946.76px;top:207px;font-size:12.5px;line-height:16px;color:#2b2b2b;">I</span>
<span class="t" style="left:9.66px;top:227px;font-size:13.5px;line-height:17px;color:#217346;">1</span>
<span class="t" style="left:9.85px;top:247px;font-size:13.5px;line-height:17px;color:#2b2b2b;">2</span>
<span class="t" style="left:9.89px;top:267px;font-size:13.5px;line-height:17px;color:#2b2b2b;">3</span>
<span class="t" style="left:9.89px;top:287px;font-size:13.5px;line-height:17px;color:#2b2b2b;">4</span>
<span class="t" style="left:9.86px;top:307px;font-size:13.5px;line-height:17px;color:#2b2b2b;">5</span>
<span class="t" style="left:9.80px;top:327px;font-size:13.5px;line-height:17px;color:#2b2b2b;">6</span>
<span class="t" style="left:9.84px;top:347px;font-size:13.5px;line-height:17px;color:#2b2b2b;">7</span>
<span class="t" style="left:9.85px;top:367px;font-size:13.5px;line-height:17px;color:#2b2b2b;">8</span>
<span class="t" style="left:9.85px;top:387px;font-size:13.5px;line-height:17px;color:#2b2b2b;">9</span>
<span class="t" style="left:6.67px;top:407px;font-size:13.5px;line-height:17px;color:#2b2b2b;letter-spacing:-0.260px;">10</span>
<span class="t" style="left:6.67px;top:427px;font-size:13.5px;line-height:17px;color:#2b2b2b;letter-spacing:0.874px;">11</span>
<span class="t" style="left:6.67px;top:447px;font-size:13.5px;line-height:17px;color:#2b2b2b;letter-spacing:-0.108px;">12</span>
<span class="t" style="left:6.67px;top:467px;font-size:13.5px;line-height:17px;color:#2b2b2b;letter-spacing:-0.194px;">13</span>
<span class="t" style="left:6.67px;top:487px;font-size:13.5px;line-height:17px;color:#2b2b2b;letter-spacing:-0.392px;">14</span>
<span class="t" style="left:6.67px;top:507px;font-size:13.5px;line-height:17px;color:#2b2b2b;letter-spacing:-0.220px;">15</span>
<span class="t" style="left:6.67px;top:527px;font-size:13.5px;line-height:17px;color:#2b2b2b;letter-spacing:-0.194px;">16</span>
<span class="t" style="left:6.67px;top:547px;font-size:13.5px;line-height:17px;color:#2b2b2b;letter-spacing:-0.108px;">17</span>
<span class="t" style="left:6.67px;top:567px;font-size:13.5px;line-height:17px;color:#2b2b2b;letter-spacing:-0.201px;">18</span>
<span class="t" style="left:6.67px;top:587px;font-size:13.5px;line-height:17px;color:#2b2b2b;letter-spacing:-0.148px;">19</span>
<span class="t" style="left:7.02px;top:607px;font-size:13.5px;line-height:17px;color:#2b2b2b;letter-spacing:-0.609px;">20</span>
<span class="t" style="left:7.02px;top:627px;font-size:13.5px;line-height:17px;color:#2b2b2b;letter-spacing:-0.477px;">21</span>
<span class="t" style="left:7.02px;top:647px;font-size:13.5px;line-height:17px;color:#2b2b2b;letter-spacing:-0.458px;">22</span>
<span class="t" style="left:7.02px;top:667px;font-size:13.5px;line-height:17px;color:#2b2b2b;letter-spacing:-0.543px;">23</span>
<span class="t" style="left:7.02px;top:687px;font-size:13.5px;line-height:17px;color:#2b2b2b;letter-spacing:-0.741px;">24</span>
<span class="t" style="left:7.02px;top:707px;font-size:13.5px;line-height:17px;color:#2b2b2b;letter-spacing:-0.570px;">25</span>
<div class="a" style="left:123px;top:226px;width:17px;height:17px;background:linear-gradient(#fff,#e9eef6);border:1px solid #c9d3e0;box-sizing:border-box;"></div>
<svg class="a" style="left:128px;top:233px" width="7" height="4" viewBox="0 0 7 4"><path d="M0 0H7L3.5 4Z" fill="#666"/></svg>
<div class="a" style="left:273px;top:226px;width:17px;height:17px;background:linear-gradient(#fff,#e9eef6);border:1px solid #c9d3e0;box-sizing:border-box;"></div>
<svg class="a" style="left:278px;top:233px" width="7" height="4" viewBox="0 0 7 4"><path d="M0 0H7L3.5 4Z" fill="#666"/></svg>
<span class="t" style="left:28.70px;top:227px;font-size:13.5px;line-height:17px;color:#fff;letter-spacing:0.199px;font-weight:bold;">Name</span>
<span class="t" style="left:28.49px;top:247px;font-size:13.5px;line-height:17px;color:#000;letter-spacing:0.240px;">Kelvin Kennedy</span>
<span class="t" style="left:29.37px;top:267px;font-size:13.5px;line-height:17px;color:#000;letter-spacing:0.233px;">Alfredo Hogan</span>
<span class="t" style="left:28.69px;top:287px;font-size:13.5px;line-height:17px;color:#000;letter-spacing:-0.100px;">Pat Garner</span>
<span class="t" style="left:28.69px;top:307px;font-size:13.5px;line-height:17px;color:#000;letter-spacing:-0.138px;">Daisy Burns</span>
<span class="t" style="left:28.49px;top:327px;font-size:13.5px;line-height:17px;color:#000;letter-spacing:0.351px;">Lillian Medina</span>
<span class="t" style="left:28.71px;top:347px;font-size:13.5px;line-height:17px;color:#000;letter-spacing:0.310px;">Christie Klein</span>
<span class="t" style="left:28.49px;top:367px;font-size:13.5px;line-height:17px;color:#000;letter-spacing:0.655px;">Mattie Hill</span>
<span class="t" style="left:28.49px;top:387px;font-size:13.5px;line-height:17px;color:#000;letter-spacing:0.301px;">Dennis Caldwell</span>
<span class="t" style="left:28.72px;top:407px;font-size:13.5px;line-height:17px;color:#000;letter-spacing:0.110px;">Gerard Turner</span>
<span class="t" style="left:28.71px;top:427px;font-size:13.5px;line-height:17px;color:#000;letter-spacing:0.202px;">Charles Hamilton</span>
<span class="t" style="left:142.80px;top:227px;font-size:13.5px;line-height:17px;color:#fff;letter-spacing:-0.374px;font-weight:bold;">Job Title</span>
<span class="t" style="left:142.29px;top:247px;font-size:13.5px;line-height:17px;color:#000;letter-spacing:0.275px;">Manager</span>
<span class="t" style="left:142.97px;top:267px;font-size:13.5px;line-height:17px;color:#000;letter-spacing:0.119px;">Assistant</span>
<span class="t" style="left:142.49px;top:287px;font-size:13.5px;line-height:17px;color:#000;letter-spacing:0.163px;">Project Manager</span>
<span class="t" style="left:143.17px;top:307px;font-size:13.5px;line-height:17px;color:#000;letter-spacing:0.544px;">Administrator</span>
<span class="t" style="left:142.29px;top:327px;font-size:13.5px;line-height:17px;color:#000;letter-spacing:0.382px;">Employee</span>
<span class="t" style="left:142.52px;top:347px;font-size:13.5px;line-height:17px;color:#000;letter-spacing:-0.008px;">Graphics</span>
<span class="t" style="left:142.35px;top:367px;font-size:13.5px;line-height:17px;color:#000;letter-spacing:0.412px;">Information Tecnology</span>
<span class="t" style="left:142.29px;top:387px;font-size:13.5px;line-height:17px;color:#000;letter-spacing:0.663px;">Marketing</span>
<span class="t" style="left:142.59px;top:407px;font-size:13.5px;line-height:17px;color:#000;letter-spacing:-0.317px;">Sales</span>
<span class="t" style="left:142.35px;top:427px;font-size:13.5px;line-height:17px;color:#000;letter-spacing:0.412px;">Information Tecnology</span>
<span class="t" style="left:293.06px;top:227px;font-size:13.5px;line-height:17px;color:#000;letter-spacing:-0.655px;font-weight:bold;">Address</span>
<span class="t" style="left:292.29px;top:247px;font-size:13.5px;line-height:17px;color:#000;letter-spacing:0.074px;">Excel to Indesign Street, 44</span>
<span class="t" style="left:292.29px;top:267px;font-size:13.5px;line-height:17px;color:#000;letter-spacing:0.081px;">Excel to Indesign Street, 45</span>
<span class="t" style="left:292.29px;top:287px;font-size:13.5px;line-height:17px;color:#000;letter-spacing:0.082px;">Excel to Indesign Street, 46</span>
<span class="t" style="left:292.29px;top:307px;font-size:13.5px;line-height:17px;color:#000;letter-spacing:0.085px;">Excel to Indesign Street, 47</span>
<span class="t" style="left:292.29px;top:327px;font-size:13.5px;line-height:17px;color:#000;letter-spacing:0.081px;">Excel to Indesign Street, 48</span>
<span class="t" style="left:292.29px;top:347px;font-size:13.5px;line-height:17px;color:#000;letter-spacing:0.083px;">Excel to Indesign Street, 49</span>
<span class="t" style="left:292.29px;top:367px;font-size:13.5px;line-height:17px;color:#000;letter-spacing:0.079px;">Excel to Indesign Street, 50</span>
<span class="t" style="left:292.29px;top:387px;font-size:13.5px;line-height:17px;color:#000;letter-spacing:0.084px;">Excel to Indesign Street, 51</span>
<span class="t" style="left:292.29px;top:407px;font-size:13.5px;line-height:17px;color:#000;letter-spacing:0.085px;">Excel to Indesign Street, 52</span>
<span class="t" style="left:292.29px;top:427px;font-size:13.5px;line-height:17px;color:#000;letter-spacing:0.082px;">Excel to Indesign Street, 53</span>
<span class="t" style="left:468.70px;top:227px;font-size:13.5px;line-height:17px;color:#000;letter-spacing:-0.222px;font-weight:bold;">Phone</span>
<span class="t" style="left:468.57px;top:247px;font-size:13.5px;line-height:17px;color:#000;letter-spacing:0.404px;">111-111111</span>
<span class="t" style="left:468.92px;top:267px;font-size:13.5px;line-height:17px;color:#000;letter-spacing:-0.412px;">222-222222</span>
<span class="t" style="left:469.09px;top:287px;font-size:13.5px;line-height:17px;color:#000;letter-spacing:-0.440px;">333-333333</span>
<span class="t" style="left:469.29px;top:307px;font-size:13.5px;line-height:17px;color:#000;letter-spacing:-0.485px;">444-444444</span>
<span class="t" style="left:469.06px;top:327px;font-size:13.5px;line-height:17px;color:#000;letter-spacing:-0.440px;">555-555555</span>
<span class="t" style="left:468.91px;top:347px;font-size:13.5px;line-height:17px;color:#000;letter-spacing:-0.421px;">666-666666</span>
<span class="t" style="left:468.91px;top:367px;font-size:13.5px;line-height:17px;color:#000;letter-spacing:-0.411px;">777-777777</span>
<span class="t" style="left:469.01px;top:387px;font-size:13.5px;line-height:17px;color:#000;letter-spacing:-0.433px;">888-888888</span>
<span class="t" style="left:468.97px;top:407px;font-size:13.5px;line-height:17px;color:#000;letter-spacing:-0.422px;">999-999999</span>
<span class="t" style="left:468.57px;top:427px;font-size:13.5px;line-height:17px;color:#000;letter-spacing:0.404px;">111-111111</span>
<span class="t" style="left:543.70px;top:227px;font-size:13.5px;line-height:17px;color:#000;letter-spacing:0.801px;font-weight:bold;">Mail</span>
<span class="t" style="left:543.70px;top:247px;font-size:13.5px;line-height:17px;color:#000;letter-spacing:0.253px;">manager@mail.com</span>
<span class="t" style="left:544.03px;top:267px;font-size:13.5px;line-height:17px;color:#000;letter-spacing:0.205px;">assistant@mail.com</span>
<span class="t" style="left:543.73px;top:287px;font-size:13.5px;line-height:17px;color:#000;letter-spacing:0.317px;">project.manager@mail.com</span>
<span class="t" style="left:544.03px;top:307px;font-size:13.5px;line-height:17px;color:#000;letter-spacing:0.396px;">administrator@mail.com</span>
<span class="t" style="left:543.83px;top:327px;font-size:13.5px;line-height:17px;color:#000;letter-spacing:0.464px;">employee@mail.com</span>
<span class="t" style="left:543.83px;top:347px;font-size:13.5px;line-height:17px;color:#000;letter-spacing:0.170px;">graphics@mail.com</span>
<span class="t" style="left:543.70px;top:367px;font-size:13.5px;line-height:17px;color:#000;letter-spacing:0.513px;">it@mail.com</span>
<span class="t" style="left:543.70px;top:387px;font-size:13.5px;line-height:17px;color:#000;letter-spacing:0.400px;">marketing@mail.com</span>
<span class="t" style="left:544.02px;top:407px;font-size:13.5px;line-height:17px;color:#000;letter-spacing:0.157px;">sales@mail.com</span>
<span class="t" style="left:543.70px;top:427px;font-size:13.5px;line-height:17px;color:#000;letter-spacing:0.406px;">it.2@mail.com</span>
<div class="a" style="left:289px;top:223px;width:179px;height:23px;border:2px solid #217346;box-sizing:border-box;"></div>
<div class="a" style="left:463px;top:241px;width:7px;height:7px;background:#fff;"></div>
<div class="a" style="left:464px;top:242px;width:5px;height:5px;background:#217346;"></div>
<div class="a" style="left:960px;top:207px;width:15px;height:519px;background:#dadada;"></div>
<div class="a" style="left:960px;top:207px;width:15px;height:15px;background:#fff;border:1px solid #bdbdbd;box-sizing:border-box;"></div>
<svg class="a" style="left:964px;top:212px;" width="7" height="4" viewBox="0 0 7 4"><path d="M0 4H7L3.5 0Z" fill="#777"/></svg>
<div class="a" style="left:960px;top:222px;width:15px;height:468px;background:#fff;border:1px solid #bdbdbd;box-sizing:border-box;"></div>
<div class="a" style="left:960px;top:711px;width:15px;height:15px;background:#fff;border:1px solid #bdbdbd;box-sizing:border-box;"></div>
<svg class="a" style="left:964px;top:717px" width="7" height="4" viewBox="0 0 7 4"><path d="M0 0H7L3.5 4Z" fill="#777"/></svg>
<!-- s_bottom -->
<svg class="a" style="left:28px;top:735px;" width="5" height="8" viewBox="0 0 5 8"><path d="M4.5 0.5L0.5 4L4.5 7.5Z" fill="#c2c2c2"/></svg>
<svg class="a" style="left:57px;top:735px;" width="5" height="8" viewBox="0 0 5 8"><path d="M0.5 0.5L4.5 4L0.5 7.5Z" fill="#c2c2c2"/></svg>
<div class="a" style="left:101px;top:725px;width:66px;height:23px;background:#fff;border:1px solid #c6c6c6;box-sizing:border-box;border-top:0;border-bottom:0;"></div>
<div class="a" style="left:101px;top:748px;width:66px;height:2px;background:#217346;"></div>
<span class="t" style="left:113.03px;top:730px;font-size:13px;line-height:17px;color:#217346;letter-spacing:-0.459px;font-weight:bold;">Sheet1</span>
<span class="t" style="left:178.81px;top:730px;font-size:13px;line-height:17px;color:#444;letter-spacing:-0.352px;">Sheet2</span>
<div class="a" style="left:231px;top:729px;width:1px;height:20px;background:#ababab;"></div>
<span class="t" style="left:243.81px;top:730px;font-size:13px;line-height:17px;color:#444;letter-spacing:-0.409px;">Sheet3</span>
<div class="a" style="left:295px;top:729px;width:1px;height:20px;background:#ababab;"></div>
<svg class="a" style="left:329px;top:731px;" width="16" height="16" viewBox="0 0 16 16"><circle cx="8" cy="8" r="7.3" fill="none" stroke="#777" stroke-width="1.1"/><path d="M4.3 8H11.7M8 4.3V11.7" stroke="#666" stroke-width="1.8"/></svg>
<div class="a" style="left:587px;top:734px;width:2px;height:2px;background:#b0b0b0;"></div>
<div class="a" style="left:587px;top:738px;width:2px;height:2px;background:#b0b0b0;"></div>
<div class="a" style="left:587px;top:742px;width:2px;height:2px;background:#b0b0b0;"></div>
<div class="a" style="left:604px;top:732px;width:353px;height:15px;background:#dadada;"></div>
<div class="a" style="left:604px;top:732px;width:15px;height:15px;background:#fff;border:1px solid #bdbdbd;box-sizing:border-box;"></div>
<svg class="a" style="left:609px;top:736px;" width="4" height="7" viewBox="0 0 4 7"><path d="M4 0V7L0 3.5Z" fill="#555"/></svg>
<div class="a" style="left:619px;top:732px;width:282px;height:15px;background:#fff;border:1px solid #bdbdbd;box-sizing:border-box;"></div>
<div class="a" style="left:942px;top:732px;width:15px;height:15px;background:#fff;border:1px solid #bdbdbd;box-sizing:border-box;"></div>
<svg class="a" style="left:948px;top:736px;" width="4" height="7" viewBox="0 0 4 7"><path d="M0 0V7L4 3.5Z" fill="#777"/></svg>
<span class="t" style="left:7.46px;top:757px;font-size:11.5px;line-height:14px;color:#444;letter-spacing:-0.519px;">Ready</span>
<svg class="a" style="left:59px;top:757px;" width="14" height="14" viewBox="0 0 14 14"><path d="M1.5 6V12.5H12.5V1.5H6.5" fill="none" stroke="#666" stroke-width="1.1"/><rect x="7" y="1" width="6" height="2.6" fill="#666"/><circle cx="3.2" cy="3.2" r="3.1" fill="#666"/><path d="M6 6.5H8M9 6.5H11M3 8.5H5M6 8.5H8M9 8.5H11M3 10.5H5M6 10.5H8M9 10.5H11" stroke="#666" stroke-width="1"/></svg>
<div class="a" style="left:927px;top:754px;width:38px;height:21px;background:#c6c6c6;"></div>
<svg class="a" style="left:939px;top:757px;" width="13" height="13" viewBox="0 0 13 13"><rect x="0.5" y="0.5" width="12" height="12" fill="none" stroke="#666"/><path d="M4.5 0.5V12.5M8.5 0.5V12.5M0.5 4.5H12.5M0.5 8.5H12.5" stroke="#666"/></svg>
<svg class="a" style="left:977px;top:757px;" width="14" height="13" viewBox="0 0 14 13"><rect x="0.5" y="0.5" width="13" height="12" fill="none" stroke="#666"/><rect x="3.5" y="2.5" width="7" height="8" fill="none" stroke="#666"/><path d="M5 4.5H9M5 6.5H9M5 8.5H9" stroke="#666" stroke-width="0.8"/></svg>
<svg class="a" style="left:1015px;top:757px;" width="14" height="13" viewBox="0 0 14 13"><rect x="0.5" y="0.5" width="13" height="12" fill="none" stroke="#666"/><path d="M5 0.5V7.5M9 0.5V7.5M0.5 7.5H9" fill="none" stroke="#666"/></svg>
<div class="a" style="left:1046px;top:763px;width:6px;height:2px;background:#555;"></div>
<div class="a" style="left:1056px;top:764px;width:100px;height:1px;background:#9a9a9a;"></div>
<div class="a" style="left:1103.5px;top:758px;width:4.6px;height:11px;background:#666;"></div>
<div class="a" style="left:1160px;top:763px;width:8px;height:2px;background:#555;"></div>
<div class="a" style="left:1163px;top:760px;width:2px;height:8px;background:#555;"></div>
<span class="t" style="left:1184.16px;top:756px;font-size:11px;line-height:14px;color:#555;letter-spacing:-0.369px;">100%</span>
<!-- s_panel -->
<div class="a" style="left:978px;top:207px;width:1px;height:544px;background:#c8c8c8;"></div>
<span class="t" style="left:991.92px;top:219px;font-size:21.5px;line-height:26px;color:#3d8a5f;letter-spacing:-0.874px;">XML Source</span>
<svg class="a" style="left:1160px;top:226px" width="9" height="5" viewBox="0 0 9 5"><path d="M0 0H9L4.5 5Z" fill="#777"/></svg>
<svg class="a" style="left:1201px;top:223px;" width="11" height="11" viewBox="0 0 11 11"><path d="M1.2 1.2L9.8 9.8M9.8 1.2L1.2 9.8" stroke="#666" stroke-width="2"/></svg>
<span class="t" style="left:992.14px;top:252px;font-size:11.5px;line-height:14px;color:#3a3a3a;letter-spacing:0.077px;">XML maps in this workbook:</span>
<div class="a" style="left:992px;top:268px;width:224px;height:22px;background:#fff;border:1px solid #ababab;box-sizing:border-box;"></div>
<div class="a" style="left:1199px;top:269px;width:1px;height:20px;background:#ababab;"></div>
<span class="t" style="left:995.86px;top:272px;font-size:11.5px;line-height:14px;color:#222;letter-spacing:-0.141px;">businesscards_Map</span>
<svg class="a" style="left:1204px;top:277px" width="7" height="4" viewBox="0 0 7 4"><path d="M0 0H7L3.5 4Z" fill="#333"/></svg>
<div class="a" style="left:992px;top:293px;width:224px;height:265px;background:#fff;border:1px solid #6e6e6e;box-sizing:border-box;"></div>
<svg class="a" style="left:0;top:0" width="1231" height="777" viewBox="0 0 1231 777" shape-rendering="crispEdges"><rect x="1010" y="304" width="1" height="1" fill="#8c8c8c"/><rect x="1012" y="304" width="1" height="1" fill="#8c8c8c"/><rect x="1014" y="304" width="1" height="1" fill="#8c8c8c"/><rect x="1023" y="312" width="1" height="1" fill="#8c8c8c"/><rect x="1023" y="314" width="1" height="1" fill="#8c8c8c"/><rect x="1023" y="316" width="1" height="1" fill="#8c8c8c"/><rect x="1029" y="322" width="1" height="1" fill="#8c8c8c"/><rect x="1031" y="322" width="1" height="1" fill="#8c8c8c"/><rect x="1033" y="322" width="1" height="1" fill="#8c8c8c"/><rect x="1042" y="330" width="1" height="1" fill="#8c8c8c"/><rect x="1042" y="332" width="1" height="1" fill="#8c8c8c"/><rect x="1042" y="334" width="1" height="1" fill="#8c8c8c"/><rect x="1042" y="336" width="1" height="1" fill="#8c8c8c"/><rect x="1042" y="338" width="1" height="1" fill="#8c8c8c"/><rect x="1042" y="340" width="1" height="1" fill="#8c8c8c"/><rect x="1042" y="342" width="1" height="1" fill="#8c8c8c"/><rect x="1042" y="344" width="1" height="1" fill="#8c8c8c"/><rect x="1042" y="346" width="1" height="1" fill="#8c8c8c"/><rect x="1042" y="348" width="1" height="1" fill="#8c8c8c"/><rect x="1042" y="350" width="1" height="1" fill="#8c8c8c"/><rect x="1042" y="352" width="1" height="1" fill="#8c8c8c"/><rect x="1042" y="354" width="1" height="1" fill="#8c8c8c"/><rect x="1042" y="356" width="1" height="1" fill="#8c8c8c"/><rect x="1042" y="358" width="1" height="1" fill="#8c8c8c"/><rect x="1042" y="360" width="1" height="1" fill="#8c8c8c"/><rect x="1042" y="362" width="1" height="1" fill="#8c8c8c"/><rect x="1042" y="364" width="1" height="1" fill="#8c8c8c"/><rect x="1042" y="366" width="1" height="1" fill="#8c8c8c"/><rect x="1042" y="368" width="1" height="1" fill="#8c8c8c"/><rect x="1042" y="370" width="1" height="1" fill="#8c8c8c"/><rect x="1042" y="372" width="1" height="1" fill="#8c8c8c"/><rect x="1042" y="374" width="1" height="1" fill="#8c8c8c"/><rect x="1042" y="376" width="1" height="1" fill="#8c8c8c"/><rect x="1042" y="378" width="1" height="1" fill="#8c8c8c"/><rect x="1042" y="380" width="1" height="1" fill="#8c8c8c"/><rect x="1042" y="382" width="1" height="1" fill="#8c8c8c"/><rect x="1042" y="384" width="1" height="1" fill="#8c8c8c"/><rect x="1042" y="386" width="1" height="1" fill="#8c8c8c"/><rect x="1042" y="388" width="1" height="1" fill="#8c8c8c"/><rect x="1042" y="390" width="1" height="1" fill="#8c8c8c"/><rect x="1042" y="392" width="1" height="1" fill="#8c8c8c"/><rect x="1042" y="394" width="1" height="1" fill="#8c8c8c"/><rect x="1042" y="396" width="1" height="1" fill="#8c8c8c"/><rect x="1042" y="398" width="1" height="1" fill="#8c8c8c"/><rect x="1042" y="400" width="1" height="1" fill="#8c8c8c"/><rect x="1042" y="402" width="1" height="1" fill="#8c8c8c"/><rect x="1042" y="404" width="1" height="1" fill="#8c8c8c"/><rect x="1042" y="406" width="1" height="1" fill="#8c8c8c"/><rect x="1042" y="408" width="1" height="1" fill="#8c8c8c"/><rect x="1042" y="410" width="1" height="1" fill="#8c8c8c"/><rect x="1042" y="412" width="1" height="1" fill="#8c8c8c"/><rect x="1044" y="340" width="1" height="1" fill="#8c8c8c"/><rect x="1046" y="340" width="1" height="1" fill="#8c8c8c"/><rect x="1048" y="340" width="1" height="1" fill="#8c8c8c"/><rect x="1050" y="340" width="1" height="1" fill="#8c8c8c"/><rect x="1052" y="340" width="1" height="1" fill="#8c8c8c"/><rect x="1044" y="358" width="1" height="1" fill="#8c8c8c"/><rect x="1046" y="358" width="1" height="1" fill="#8c8c8c"/><rect x="1048" y="358" width="1" height="1" fill="#8c8c8c"/><rect x="1050" y="358" width="1" height="1" fill="#8c8c8c"/><rect x="1052" y="358" width="1" height="1" fill="#8c8c8c"/><rect x="1044" y="376" width="1" height="1" fill="#8c8c8c"/><rect x="1046" y="376" width="1" height="1" fill="#8c8c8c"/><rect x="1048" y="376" width="1" height="1" fill="#8c8c8c"/><rect x="1050" y="376" width="1" height="1" fill="#8c8c8c"/><rect x="1052" y="376" width="1" height="1" fill="#8c8c8c"/><rect x="1044" y="394" width="1" height="1" fill="#8c8c8c"/><rect x="1046" y="394" width="1" height="1" fill="#8c8c8c"/><rect x="1048" y="394" width="1" height="1" fill="#8c8c8c"/><rect x="1050" y="394" width="1" height="1" fill="#8c8c8c"/><rect x="1052" y="394" width="1" height="1" fill="#8c8c8c"/><rect x="1044" y="412" width="1" height="1" fill="#8c8c8c"/><rect x="1046" y="412" width="1" height="1" fill="#8c8c8c"/><rect x="1048" y="412" width="1" height="1" fill="#8c8c8c"/><rect x="1050" y="412" width="1" height="1" fill="#8c8c8c"/><rect x="1052" y="412" width="1" height="1" fill="#8c8c8c"/></svg>
<svg class="a" style="left:1000px;top:300px;" width="9" height="9" viewBox="0 0 9 9"><rect x="0.5" y="0.5" width="8" height="8" rx="1" fill="#fff" stroke="#919191"/><path d="M2 4.5H7" stroke="#2a3f9d"/></svg>
<svg class="a" style="left:1019px;top:318px;" width="9" height="9" viewBox="0 0 9 9"><rect x="0.5" y="0.5" width="8" height="8" rx="1" fill="#fff" stroke="#919191"/><path d="M2 4.5H7" stroke="#2a3f9d"/></svg>
<svg class="a" style="left:1015px;top:296px;" width="16" height="14" viewBox="0 0 16 14"><path d="M0.5 11.5V2.5Q0.5 1.5 1.5 1.5H5L6.5 3H11.5V5" fill="#fbe7a2" stroke="#c9a54a"/><path d="M0.5 11.8L3.5 5H15.3L12.5 11.8Z" fill="#f2bd42" stroke="#b98a1f"/><path d="M1 12.3H12.8L15.5 5.6" fill="none" stroke="#6b5419" stroke-width="0.9"/><path d="M12.2 -1.2V4.4M9.8 0.2L14.6 3M14.6 0.2L9.8 3" stroke="#e81e1e" stroke-width="1.2"/></svg>
<svg class="a" style="left:1034px;top:314px;" width="16" height="14" viewBox="0 0 16 14"><path d="M0.5 11.5V2.5Q0.5 1.5 1.5 1.5H5L6.5 3H11.5V5" fill="#fbe7a2" stroke="#c9a54a"/><path d="M0.5 11.8L3.5 5H15.3L12.5 11.8Z" fill="#f2bd42" stroke="#b98a1f"/><path d="M1 12.3H12.8L15.5 5.6" fill="none" stroke="#6b5419" stroke-width="0.9"/><rect x="3.8" y="8" width="7" height="5.6" fill="#2f55c4"/><path d="M4.8 9.3L7.3 12L9.8 9.3Z" fill="#fff"/><path d="M3.8 8.3H10.8" stroke="#8fb0f0"/></svg>
<svg class="a" style="left:1054px;top:333px;" width="13" height="12" viewBox="0 0 13 12"><path d="M0.5 3.5L3.5 0.5H12.5V11.5H0.5Z" fill="#fff" stroke="#8a97ad"/><path d="M12.5 1V11.5H0.5" fill="none" stroke="#4f5f7c"/><path d="M0.5 3.5H3.5V0.5" fill="none" stroke="#8a97ad"/><path d="M5 2.5H11M2.5 4.5H11M2.5 6.5H11M2.5 8.5H11" stroke="#8e9db8"/></svg>
<svg class="a" style="left:1054px;top:351px;" width="13" height="12" viewBox="0 0 13 12"><path d="M0.5 3.5L3.5 0.5H12.5V11.5H0.5Z" fill="#fff" stroke="#8a97ad"/><path d="M12.5 1V11.5H0.5" fill="none" stroke="#4f5f7c"/><path d="M0.5 3.5H3.5V0.5" fill="none" stroke="#8a97ad"/><path d="M5 2.5H11M2.5 4.5H11M2.5 6.5H11M2.5 8.5H11" stroke="#8e9db8"/></svg>
<svg class="a" style="left:1054px;top:369px;" width="13" height="12" viewBox="0 0 13 12"><path d="M0.5 3.5L3.5 0.5H12.5V11.5H0.5Z" fill="#fff" stroke="#8a97ad"/><path d="M12.5 1V11.5H0.5" fill="none" stroke="#4f5f7c"/><path d="M0.5 3.5H3.5V0.5" fill="none" stroke="#8a97ad"/><path d="M5 2.5H11M2.5 4.5H11M2.5 6.5H11M2.5 8.5H11" stroke="#8e9db8"/></svg>
<svg class="a" style="left:1054px;top:387px;" width="13" height="12" viewBox="0 0 13 12"><path d="M0.5 3.5L3.5 0.5H12.5V11.5H0.5Z" fill="#fff" stroke="#8a97ad"/><path d="M12.5 1V11.5H0.5" fill="none" stroke="#4f5f7c"/><path d="M0.5 3.5H3.5V0.5" fill="none" stroke="#8a97ad"/><path d="M5 2.5H11M2.5 4.5H11M2.5 6.5H11M2.5 8.5H11" stroke="#8e9db8"/></svg>
<svg class="a" style="left:1054px;top:405px;" width="13" height="12" viewBox="0 0 13 12"><path d="M0.5 3.5L3.5 0.5H12.5V11.5H0.5Z" fill="#fff" stroke="#8a97ad"/><path d="M12.5 1V11.5H0.5" fill="none" stroke="#4f5f7c"/><path d="M0.5 3.5H3.5V0.5" fill="none" stroke="#8a97ad"/><path d="M5 2.5H11M2.5 4.5H11M2.5 6.5H11M2.5 8.5H11" stroke="#8e9db8"/></svg>
<span class="t" style="left:1036.16px;top:296px;font-size:11.5px;line-height:14px;color:#000;letter-spacing:-0.046px;">businesscards</span>
<span class="t" style="left:1054.91px;top:314px;font-size:11.5px;line-height:14px;color:#000;letter-spacing:0.253px;">card</span>
<span class="t" style="left:1073.64px;top:332px;font-size:11.5px;line-height:14px;color:#000;letter-spacing:0.570px;font-weight:bold;">name</span>
<span class="t" style="left:1074.58px;top:350px;font-size:11.5px;line-height:14px;color:#000;letter-spacing:0.232px;font-weight:bold;">jobtitle</span>
<div class="a" style="left:1072px;top:366px;width:44px;height:18px;background:#3399ff;"></div>
<span class="t" style="left:1074.21px;top:368px;font-size:11.5px;line-height:14px;color:#fff;letter-spacing:-0.118px;">address</span>
<span class="t" style="left:1073.96px;top:386px;font-size:11.5px;line-height:14px;color:#000;letter-spacing:0.769px;">phone</span>
<span class="t" style="left:1073.94px;top:404px;font-size:11.5px;line-height:14px;color:#000;letter-spacing:0.816px;">mail</span>
<span class="t" style="left:992.34px;top:562px;font-size:11.5px;line-height:14px;color:#222;letter-spacing:0.043px;">To map repeating elements, drag the</span>
<span class="t" style="left:992.11px;top:575px;font-size:11.5px;line-height:14px;color:#222;letter-spacing:0.139px;">elements from the tree onto the worksheet</span>
<span class="t" style="left:992.62px;top:588px;font-size:11.5px;line-height:14px;color:#222;letter-spacing:0.162px;">where you want the data headings to</span>
<span class="t" style="left:992.11px;top:601px;font-size:11.5px;line-height:14px;color:#222;letter-spacing:0.195px;">appear.</span>
<span class="t" style="left:992.34px;top:627px;font-size:11.5px;line-height:14px;color:#222;letter-spacing:-0.038px;">To import XML data, right click an XML</span>
<span class="t" style="left:991.84px;top:640px;font-size:11.5px;line-height:14px;color:#222;letter-spacing:0.062px;">mapped cell, point to XML, and then click</span>
<span class="t" style="left:991.54px;top:653px;font-size:11.5px;line-height:14px;color:#222;letter-spacing:0.387px;">Import.</span>
<div class="a" style="left:992px;top:669px;width:67px;height:23px;background:#fff;border:1px solid #ababab;box-sizing:border-box;"></div>
<span class="t" style="left:996.86px;top:674px;font-size:11.5px;line-height:14px;color:#222;letter-spacing:0.421px;">Options</span>
<svg class="a" style="left:1045px;top:679px" width="8" height="4" viewBox="0 0 8 4"><path d="M0 0H8L4.0 4Z" fill="#333"/></svg>
<div class="a" style="left:1068px;top:669px;width:79px;height:23px;background:#fff;border:1px solid #ababab;box-sizing:border-box;"></div>
<span class="t" style="left:1076.74px;top:674px;font-size:11.5px;line-height:14px;color:#222;letter-spacing:-0.181px;">XML Maps...</span>
<span class="t" style="left:992.45px;top:697px;font-size:11.5px;line-height:14px;color:#2b579a;letter-spacing:0.049px;">Verify Map for Export...</span>
<div class="a" style="left:992px;top:715px;width:224px;height:1px;background:#c6c6c6;"></div>
<svg class="a" style="left:992px;top:721px;" width="16" height="16" viewBox="0 0 16 16"><circle cx="8" cy="8" r="8" fill="#245a93"/><text x="8" y="12.6" text-anchor="middle" font-size="13" font-weight="bold" fill="#fff" font-family="Liberation Sans,sans-serif">?</text></svg>
<span class="t" style="left:1013.24px;top:722px;font-size:11.5px;line-height:14px;color:#2b579a;">Tips for mapping XML</span>
<div class="a" style="left:1229px;top:159px;width:1px;height:594px;background:#f1f1f1;"></div>
<!-- s_callout -->
<svg class="a" style="left:0;top:0" width="1231" height="777" viewBox="0 0 1231 777"><path d="M1038 366.7L486 240.3" stroke="#0a96fa" stroke-width="4.2" fill="none"/><path d="M468 235.6L490 230L485 249.2Z" fill="#0a96fa"/><rect x="659.1" y="184.9" width="227.2" height="44" rx="9.5" fill="#fff" stroke="#0a96fa" stroke-width="4.2"/><rect x="1038" y="358.3" width="117.8" height="34.4" rx="10" fill="none" stroke="#0a96fa" stroke-width="4"/></svg>
<span class="t" style="left:686.73px;top:193px;font-size:22px;line-height:27px;color:#0a96fa;letter-spacing:-0.316px;font-weight:bold;">Drag in first row</span>
</body></html>
